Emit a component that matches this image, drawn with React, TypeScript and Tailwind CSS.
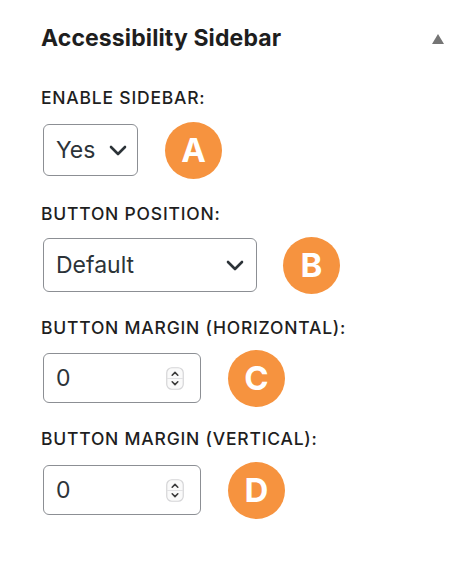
const font = { fontFamily: 'Inter, "Noto Sans", sans-serif' };

function Badge({ letter }: { letter: string }) {
  return (
    <div className="flex h-[57px] w-[57px] shrink-0 items-center justify-center rounded-full bg-[#f6933f] text-[33px] font-bold leading-none text-white">
      {letter}
    </div>
  );
}

function Chevron() {
  return (
    <svg width="18" height="11" viewBox="0 0 18 11" fill="none">
      <path d="M2 2l7 7 7-7" stroke="#2c3338" strokeWidth="2.6" strokeLinecap="round" strokeLinejoin="round" />
    </svg>
  );
}

function Spinner() {
  return (
    <svg width="18" height="23" viewBox="0 0 18 23" fill="none">
      <rect x="0.75" y="0.75" width="16.5" height="21.5" rx="5" fill="#fafafa" stroke="#d5d5d7" strokeWidth="1.2" />
      <line x1="1" y1="11.5" x2="17" y2="11.5" stroke="#e2e2e4" strokeWidth="1" />
      <path d="M6.2 8.2L9 5.4l2.8 2.8" stroke="#3c3c3c" strokeWidth="1.6" strokeLinecap="round" strokeLinejoin="round" />
      <path d="M6.2 14.8L9 17.6l2.8-2.8" stroke="#3c3c3c" strokeWidth="1.6" strokeLinecap="round" strokeLinejoin="round" />
    </svg>
  );
}

function Label({ children, className }: { children: string; className: string }) {
  return (
    <div className={`text-[17.5px] font-medium uppercase leading-5 tracking-[0.045em] text-[#1e1e1e] ${className}`}>
      {children}
    </div>
  );
}

export default function App() {
  return (
    <div className="h-[578px] w-[474px] bg-white pl-[41px] pr-[30px] pt-[24px]" style={font}>
      <div className="flex items-center justify-between">
        <h2 className="text-[23px] font-bold leading-7 tracking-[0.005em] text-[#1e1e1e]">Accessibility Sidebar</h2>
        <svg width="12" height="10" viewBox="0 0 12 10" className="mt-[2px]">
          <path d="M6 0L12 10H0z" fill="#757575" />
        </svg>
      </div>

      <div className="mt-[36px]">
        <Label className="mb-[16px]">Enable Sidebar:</Label>
        <div className="ml-[2px] flex h-[52px] items-center gap-[27px]">
          <div className="flex h-[52px] w-[95px] items-center justify-between rounded-[6px] border-[1.5px] border-[#8c8f94] pl-[12px] pr-[10px] text-[23px] text-[#2c3338]">
            <span>Yes</span>
            <Chevron />
          </div>
          <Badge letter="A" />
        </div>
      </div>

      <div className="mt-[28px]">
        <Label className="mb-[14px]">Button Position:</Label>
        <div className="ml-[2px] flex h-[54px] items-center gap-[26px]">
          <div className="flex h-[54px] w-[214px] items-center justify-between rounded-[6px] border-[1.5px] border-[#8c8f94] pl-[12px] pr-[12px] text-[23px] text-[#2c3338]">
            <span>Default</span>
            <Chevron />
          </div>
          <Badge letter="B" />
        </div>
      </div>

      <div className="mt-[26px]">
        <Label className="mb-[15px]">Button Margin (Horizontal):</Label>
        <div className="ml-[2px] flex h-[50px] items-center gap-[27px]">
          <div className="flex h-[50px] w-[158px] items-center justify-between rounded-[6px] border-[1.5px] border-[#8c8f94] pl-[12px] pr-[16px] text-[23px] text-[#2c3338]">
            <span>0</span>
            <Spinner />
          </div>
          <Badge letter="C" />
        </div>
      </div>

      <div className="mt-[26px]">
        <Label className="mb-[16px]">Button Margin (Vertical):</Label>
        <div className="ml-[2px] flex h-[50px] items-center gap-[27px]">
          <div className="flex h-[50px] w-[158px] items-center justify-between rounded-[6px] border-[1.5px] border-[#8c8f94] pl-[12px] pr-[16px] text-[23px] text-[#2c3338]">
            <span>0</span>
            <Spinner />
          </div>
          <Badge letter="D" />
        </div>
      </div>
    </div>
  );
}
